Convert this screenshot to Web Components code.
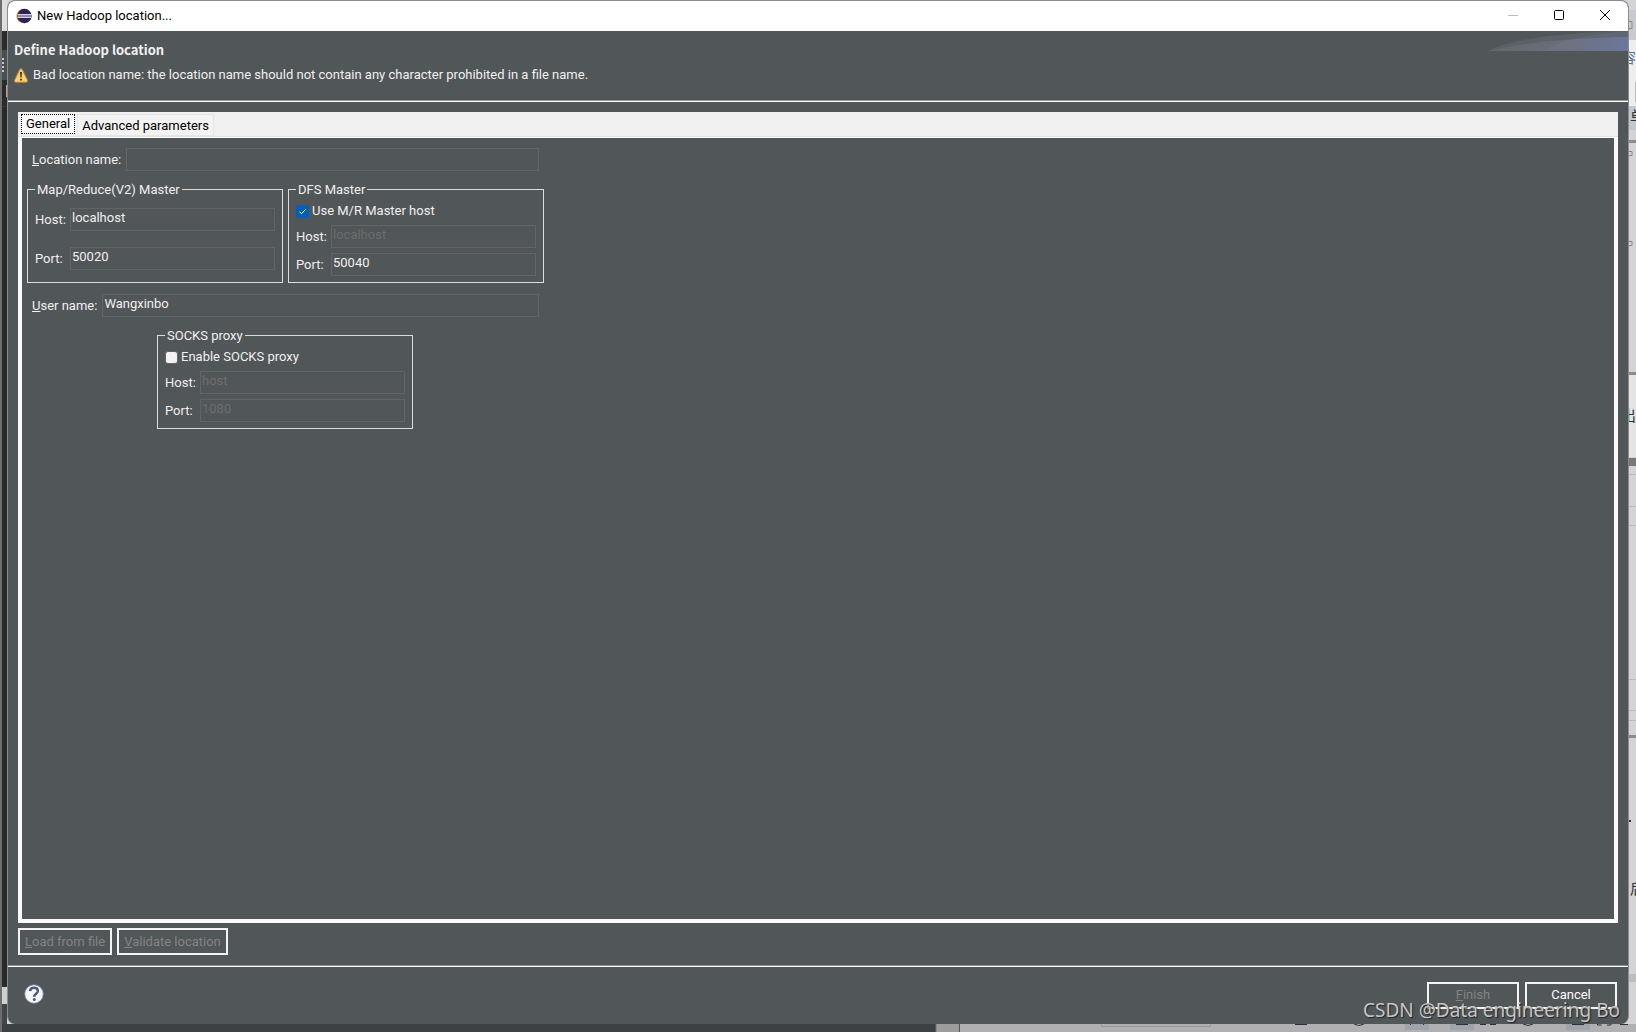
<!DOCTYPE html>
<html lang="en">
<head>
<meta charset="utf-8">
<title>New Hadoop location...</title>
<style>
    body {
        margin: 0;
        font-family: Roboto, "Noto Sans CJK SC", sans-serif;
        font-size: 13px;
        line-height: 18px;
        color: #f0f0f0;
    }
</style>
</head>
<body>
<app-desktop>
    <dialog-window heading="New Hadoop location...">
        <dialog-header heading="Define Hadoop location">Bad location name: the location name should not contain any character prohibited in a file name.</dialog-header>
        <tab-folder>
            <button slot="tab" type="button" role="tab" aria-selected="true">General</button>
            <button slot="tab" type="button" role="tab" aria-selected="false">Advanced parameters</button>
            <location-form></location-form>
        </tab-folder>
        <push-button slot="tools" disabled><u>L</u>oad from file</push-button>
        <push-button slot="tools" disabled><u>V</u>alidate location</push-button>
        <push-button slot="actions" wide disabled><u>F</u>inish</push-button>
        <push-button slot="actions" wide>Cancel</push-button>
    </dialog-window>
    <water-mark slot="overlay">CSDN @Data engineering Bo</water-mark>
</app-desktop>

<script>
class BaseElement extends HTMLElement {
    render(html) {
        const template = document.createElement('template');
        template.innerHTML = html;
        this.attachShadow({ mode: 'open' });
        this.shadowRoot.appendChild(template.content.cloneNode(true));
    }
}

// Parts of the windows behind the dialog show at its left, right and bottom
class AppDesktop extends BaseElement {
    connectedCallback() {
        this.render(`
            <style>
                :host {
                    background: #d4d4d6;
                    box-sizing: border-box;
                    display: grid;
                    grid-template-columns: 7px minmax(0, 1fr) 7px;
                    grid-template-rows: 1fr 8px;
                    min-height: 100vh;
                    overflow: hidden;
                    position: relative;
                }

                .left {
                    background: linear-gradient(#dedede 31px, #2b2b2b 31px, #2b2b2b 50px, #4a4f52 50px, #4a4f52 80px, #2b2b2b 80px, #2b2b2b 106px, #3a3a3a 106px, #3a3a3a 107px, #292929 107px);
                    border-left: 2px solid #6e6e6e;
                    display: flex;
                    flex-direction: column;
                    justify-content: space-between;
                }

                .left svg {
                    display: block;
                }

                .left::after {
                    background: #cfcfcf;
                    border-bottom: 20px solid #424648;
                    content: "";
                    height: 17px;
                }

                .right {
                    overflow: hidden;
                    position: relative;
                }

                .right svg {
                    display: block;
                }

                .right span {
                    color: #333;
                    font-size: 15px;
                    left: 1px;
                    position: absolute;
                }

                .right .cut {
                    left: -8px;
                }

                .right .blue {
                    color: #5f7596;
                }

                .bottom {
                    background: linear-gradient(90deg, #6e6e6e 2px, #3d4143 2px, #3d4143 935px, #9c9c9c 937px, #9c9c9c 959px, #555 959px, #555 960px, #b0b0b2 960px);
                    display: flex;
                    grid-column: 1 / 4;
                    justify-content: flex-end;
                }

                ::slotted([slot="overlay"]) {
                    bottom: 8px;
                    position: absolute;
                    right: 16px;
                }
            </style>
            <div class="left">
                <svg width="5" height="100" aria-hidden="true">
                    <path fill="#c8c8c8" d="M0 58h2v2H0zM0 62h2v2H0zM0 66h2v2H0zM0 70h2v2H0z"/>
                    <path fill="#b5a67f" d="M4 85h1v12H4z"/>
                </svg>
            </div>
            <slot></slot>
            <div class="right" aria-hidden="true">
                <svg width="7" height="1024">
                    <path fill="#c9cacf" d="M0 10h7v30H0z"/>
                    <path fill="#eeeeef" d="M0 40h7v66H0z"/>
                    <path fill="#c2c8d0" d="M0 106h7v24H0z"/>
                    <path fill="#8c8c8c" d="M0 140h7v3H0zM0 372h7v3H0zM0 735h7v3H0z"/>
                    <path fill="#e4e4e4" d="M0 375h7v82H0z"/>
                    <path fill="#777" d="M0 458h7v8H0z"/>
                    <path fill="#bdbdbd" d="M0 474h7v1H0zM0 506h7v1H0zM0 525h7v1H0zM0 679h7v1H0zM0 710h7v1H0zM0 720h7v1H0zM0 974h7v8H0zM6 82h1v20H6z"/>
                    <path fill="none" stroke="#888" d="M-2 151.500h5v4h-5zM-2 241.500h5v4h-5zM-1 21.500h4v7h-4z"/>
                    <path fill="#333" d="M0 820h2v2H0z"/>
                </svg>
                <span class="cut blue" style="top:49px">容</span>
                <span style="top:108px">单</span>
                <span class="cut" style="top:407px">出</span>
                <span style="top:880px">后</span>
            </div>
            <div class="bottom" aria-hidden="true">
                <svg width="640" height="8">
                    <path fill="#a0a3a8" d="M409 0h24v6h-24zM454 0h24v6h-24zM570 0h24v6h-24z"/>
                    <path fill="none" stroke="#999" d="M105.500 0v2.500h109V0"/>
                    <path fill="none" stroke="#2d3038" d="M299 .5h12M358 0q5 3 10 0M414.500 0v1M427.500 0v1M460 .5h12M484 .5h6M494 .5h6M527 0q5 3 10 0M576 .5h12M601.500 0v1h4M611 1h4v-1M624 .5h8"/>
                </svg>
            </div>
            <slot name="overlay"></slot>
        `);
    }
}

class DialogWindow extends BaseElement {
    connectedCallback() {
        this.render(`
            <style>
                :host {
                    background: #515658;
                    border: 1px solid #8a8c8d;
                    border-bottom: 0;
                    border-radius: 8px;
                    display: flex;
                    flex-direction: column;
                    overflow: hidden;
                }

                .title-bar {
                    align-items: center;
                    background: #fff;
                    color: #000;
                    display: flex;
                    gap: 5px;
                    height: 30px;
                    padding: 0 8px;
                }

                .title {
                    flex: 1;
                }

                .title-bar button {
                    background: none;
                    border: 0;
                    height: 28px;
                    padding: 0;
                    width: 30px;
                }

                .controls {
                    align-self: flex-start;
                    display: flex;
                    gap: 16px;
                }

                svg {
                    display: block;
                }

                .controls svg {
                    margin: 0 auto;
                }

                .content {
                    display: flex;
                    flex: 1;
                    flex-direction: column;
                    gap: 5px;
                    padding: 10px;
                }

                .tools {
                    display: flex;
                    gap: 5px;
                }

                .footer {
                    align-items: center;
                    border-top: 1px solid #8e8e8e;
                    box-shadow: inset 0 1px #fff;
                    display: flex;
                    gap: 6px;
                    height: 58px;
                    padding: 0 11px 0 16px;
                }

                .help {
                    background: none;
                    border: 0;
                    margin-right: auto;
                    padding: 0 0 2px;
                }
            </style>
            <div class="title-bar">
                <svg width="16" height="16" viewBox="0 0 16 16">
                    <circle cx="7.500" cy="8" r="7.200" fill="#f0922b"/>
                    <circle cx="8.500" cy="8" r="7.200" fill="#2c2255"/>
                    <path fill="#d6d3e4" d="M1.500 6h14v1h-14zM1.500 9h14v1h-14z"/>
                    <path fill="#8f89ae" d="M1.500 7h14v2h-14z"/>
                </svg>
                <span class="title">${this.getAttribute('heading')}</span>
                <div class="controls">
                    <button type="button" aria-label="Minimize" disabled>
                        <svg width="10" height="10" fill="none" stroke="#bdbdbd"><path d="M0 5.500h10"/></svg>
                    </button>
                    <button type="button" aria-label="Maximize">
                        <svg width="10" height="10" fill="none" stroke="#000"><rect x=".5" y=".5" width="9" height="9" rx="1"/></svg>
                    </button>
                    <button type="button" aria-label="Close">
                        <svg width="10" height="10" fill="none" stroke="#000"><path d="M0 0l10 10M10 0L0 10"/></svg>
                    </button>
                </div>
            </div>
            <slot name="header"></slot>
            <div class="content">
                <slot></slot>
                <div class="tools"><slot name="tools"></slot></div>
            </div>
            <div class="footer">
                <button class="help" type="button" aria-label="Help">
                    <svg width="20" height="20" viewBox="0 0 20 20">
                        <circle cx="10" cy="10" r="9.300" fill="#f5f6f8" stroke="#6e7d9c" stroke-width=".8"/>
                        <path fill="none" stroke="#4a5a85" stroke-width="2.400" d="M6 7.200C6.300 4.800 8 3.800 10 3.800c2.300 0 3.900 1.300 3.900 3.200 0 2.400-3.600 2.600-3.600 5.700"/>
                        <circle cx="10.300" cy="15.600" r="1.500" fill="#4a5a85"/>
                    </svg>
                </button>
                <slot name="actions"></slot>
            </div>
        `);
        const header = this.querySelector('dialog-header');
        if (header) header.slot = 'header';
    }
}

class DialogHeader extends BaseElement {
    connectedCallback() {
        this.render(`
            <style>
                :host {
                    border-bottom: 1px solid #fff;
                    box-shadow: inset 0 -1px #9b9b95;
                    display: flex;
                    height: 70px;
                }

                .text {
                    display: flex;
                    flex: 1;
                    flex-direction: column;
                    gap: 7px;
                    padding: 10px 6px;
                }

                h1 {
                    font-family: "Noto Sans CJK SC", sans-serif;
                    font-size: 13px;
                    line-height: 18px;
                    margin: 0;
                }

                p {
                    align-items: center;
                    display: flex;
                    gap: 5px;
                    margin: 0;
                }
            </style>
            <div class="text">
                <h1>${this.getAttribute('heading')}</h1>
                <p>
                    <svg width="14" height="15" viewBox="0 0 14 15">
                        <path fill="#f7cf74" stroke="#b98a3c" stroke-linejoin="round" d="M7 .8c.8 0 1.200.5 1.500 1.100l4.800 10c.5 1.200 0 2.300-1.200 2.300H1.900C.7 14.200.2 13.100.7 11.900l4.800-10C5.800 1.300 6.200.8 7 .8z"/>
                        <path fill="#4a3413" d="M6 4h2l-.4 5.500H6.400zM6.100 10.800h1.800v1.800H6.100z"/>
                    </svg>
                    <slot></slot>
                </p>
            </div>
            <svg width="140" height="20" viewBox="0 0 140 20">
                <defs>
                    <linearGradient id="wave">
                        <stop offset="0" stop-color="#63686d"/>
                        <stop offset=".6" stop-color="#696f7b"/>
                        <stop offset="1" stop-color="#68749a"/>
                    </linearGradient>
                </defs>
                <path fill="#5b6069" d="M0 20C20 8 70 3 125 0h15v20z"/>
                <path fill="url(#wave)" d="M0 20C35 11 90 7 140 6v14z"/>
                <path fill="#7a84a0" fill-opacity=".2" d="M56 20C68 10 95 4 140 0v20z"/>
            </svg>
        `);
    }
}

class TabFolder extends BaseElement {
    connectedCallback() {
        this.render(`
            <style>
                :host {
                    border: 4px solid #fafafa;
                    border-top: 0;
                    display: flex;
                    flex: 1;
                    flex-direction: column;
                }

                .tabs {
                    align-items: center;
                    background: #f0f0f0;
                    box-shadow: inset 0 -1px #fff, inset 0 -2px #e2e2e2;
                    display: flex;
                    gap: 2px;
                    height: 26px;
                    margin: 0 -4px;
                    padding: 0 3px;
                }

                ::slotted(button) {
                    background: #f3f3f3;
                    border: 1px solid #e6e6e6;
                    color: #000;
                    font: inherit;
                    height: 22px;
                    padding: 2px 4px 0;
                }

                ::slotted(button[aria-selected="true"]) {
                    background: #fafafa;
                    border: 1px dotted #000;
                    height: 20px;
                    line-height: 16px;
                    margin-bottom: 2px;
                    padding: 0 4px;
                }

                .panel {
                    flex: 1;
                    padding: 10px 5px;
                }
            </style>
            <div class="tabs" role="tablist"><slot name="tab"></slot></div>
            <div class="panel" role="tabpanel"><slot></slot></div>
        `);
    }
}

class LocationForm extends BaseElement {
    connectedCallback() {
        this.render(`
            <style>
                :host {
                    display: grid;
                    grid-template-columns: 256px 256px;
                    gap: 9px 5px;
                }

                .row {
                    grid-column: 1 / 3;
                    padding: 0 5px;
                }

                .user {
                    padding-top: 2px;
                }

                .proxy {
                    grid-column: 1 / 3;
                    margin: 0 131px 0 130px;
                }

                .spread {
                    --group-gap: 16px;
                    --group-padding: 9px 7px 12px;
                }
            </style>
            <form-field class="row"><u>L</u>ocation name:</form-field>
            <group-box class="spread" heading="Map/Reduce(V2) Master">
                <form-field aligned value="localhost">Host:</form-field>
                <form-field aligned value="50020">Port:</form-field>
            </group-box>
            <group-box heading="DFS Master">
                <check-field checked>Use M/R Master host</check-field>
                <form-field aligned disabled value="localhost">Host:</form-field>
                <form-field aligned value="50040">Port:</form-field>
            </group-box>
            <form-field class="row user" value="Wangxinbo"><u>U</u>ser name:</form-field>
            <group-box class="proxy" heading="SOCKS proxy">
                <check-field>Enable SOCKS proxy</check-field>
                <form-field aligned disabled value="host">Host:</form-field>
                <form-field aligned disabled value="1080">Port:</form-field>
            </group-box>
        `);
    }
}

class GroupBox extends BaseElement {
    connectedCallback() {
        this.render(`
            <style>
                :host {
                    display: grid;
                }

                fieldset {
                    border: 1px solid #dcdcdc;
                    margin: 0;
                    min-width: 0;
                    padding: var(--group-padding, 3px 7px 6px);
                }

                legend {
                    line-height: 19px;
                    padding: 0 2px;
                }

                .fields {
                    display: flex;
                    flex-direction: column;
                    gap: var(--group-gap, 5px);
                }
            </style>
            <fieldset>
                <legend>${this.getAttribute('heading')}</legend>
                <div class="fields"><slot></slot></div>
            </fieldset>
        `);
    }
}

class FormField extends BaseElement {
    connectedCallback() {
        this.render(`
            <style>
                :host {
                    display: block;
                }

                label {
                    align-items: center;
                    display: flex;
                    gap: 5px;
                }

                :host([aligned]) label {
                    display: grid;
                    gap: 0;
                    grid-template-columns: 35px 1fr;
                }

                input {
                    background: transparent;
                    border: 1px solid #646464;
                    box-sizing: border-box;
                    color: inherit;
                    flex: 1;
                    font: inherit;
                    height: 23px;
                    min-width: 0;
                    padding: 0 1px 4px;
                }

                input:disabled {
                    color: #6d6d6d;
                }
            </style>
            <label><span><slot></slot></span><input type="text"></label>
        `);
        const input = this.shadowRoot.querySelector('input');
        input.value = this.getAttribute('value') || '';
        input.disabled = this.hasAttribute('disabled');
    }
}

class CheckField extends BaseElement {
    connectedCallback() {
        this.render(`
            <style>
                :host {
                    display: block;
                }

                label {
                    align-items: center;
                    display: flex;
                    gap: 3px;
                    height: 18px;
                }

                input {
                    appearance: none;
                    background: #f3f3f3;
                    border: 1px solid #5f6466;
                    border-radius: 3px;
                    box-sizing: border-box;
                    height: 13px;
                    margin: 0;
                    width: 13px;
                }

                input:checked {
                    background: #005fb8 url('data:image/svg+xml,<svg xmlns="http://www.w3.org/2000/svg" viewBox="0 0 13 13"><path d="M3.500 6.700l2 2 4-4.200" fill="none" stroke="white"/></svg>') center / 13px;
                    border-color: #005fb8;
                }
            </style>
            <label><input type="checkbox"><span><slot></slot></span></label>
        `);
        this.shadowRoot.querySelector('input').checked = this.hasAttribute('checked');
    }
}

class PushButton extends BaseElement {
    connectedCallback() {
        this.render(`
            <style>
                :host {
                    display: block;
                }

                button {
                    background: transparent;
                    border: 2px solid #f3f3f3;
                    box-sizing: border-box;
                    color: #fff;
                    font: inherit;
                    height: 27px;
                    padding: 0 5px;
                }

                button:disabled {
                    color: #838383;
                }

                :host([wide]) button {
                    width: 92px;
                }
            </style>
            <button type="button"><slot></slot></button>
        `);
        this.shadowRoot.querySelector('button').disabled = this.hasAttribute('disabled');
    }
}

class WaterMark extends BaseElement {
    connectedCallback() {
        this.render(`
            <style>
                :host {
                    color: #c4c6c7;
                    display: block;
                    font-family: "Noto Sans", sans-serif;
                    font-size: 19px;
                    line-height: 28px;
                    text-shadow: 1px 1px 1px #222;
                    white-space: nowrap;
                }
            </style>
            <slot></slot>
        `);
    }
}

window.customElements.define('app-desktop', AppDesktop);
window.customElements.define('dialog-window', DialogWindow);
window.customElements.define('dialog-header', DialogHeader);
window.customElements.define('tab-folder', TabFolder);
window.customElements.define('location-form', LocationForm);
window.customElements.define('group-box', GroupBox);
window.customElements.define('form-field', FormField);
window.customElements.define('check-field', CheckField);
window.customElements.define('push-button', PushButton);
window.customElements.define('water-mark', WaterMark);
</script>
</body>
</html>
